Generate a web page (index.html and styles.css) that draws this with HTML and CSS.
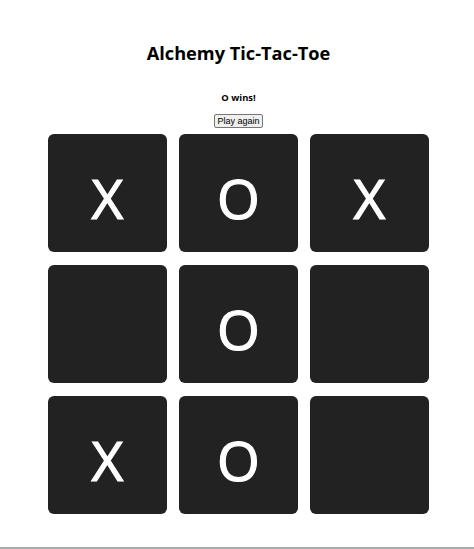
FILE: index.html
```html
<!DOCTYPE html>
<html>
<head>
<meta charset="utf-8">
<link rel="stylesheet" href="styles.css">
</head>
<body>
<div class="page">
  <h1 class="title">Alchemy Tic-Tac-Toe</h1>
  <p class="status">O wins!</p>
  <button class="reset">Play again</button>
  <div class="board">
    <div class="cell">X</div>
    <div class="cell">O</div>
    <div class="cell">X</div>
    <div class="cell"></div>
    <div class="cell">O</div>
    <div class="cell"></div>
    <div class="cell">X</div>
    <div class="cell">O</div>
    <div class="cell"></div>
  </div>
</div>
<div class="bottom-bar"></div>
</body>
</html>
```
FILE: styles.css
```css
html, body {
  margin: 0;
  padding: 0;
  background: #ffffff;
}
body {
  height: 549px;
  display: flex;
  flex-direction: column;
  justify-content: space-between;
  font-family: "Open Sans", "Noto Sans", sans-serif;
  color: #000;
}
.page {
  display: flex;
  flex-direction: column;
  align-items: center;
  padding-top: 40px;
  padding-left: 3px;
}
.title {
  margin: 0;
  font-size: 18.2px;
  font-weight: 700;
  line-height: 26px;
}
.status {
  margin: 25px 0 0;
  font-size: 9.4px;
  font-weight: 700;
  line-height: 14px;
}
.reset {
  margin-top: 9px;
  font-family: "Liberation Sans", Arial, sans-serif;
  font-size: 9px;
  padding: 1px 2px;
  background: #efefef;
  border: 1px solid #767676;
  border-radius: 2px;
  line-height: 10px;
}
.board {
  margin-top: 6px;
  display: grid;
  grid-template-columns: repeat(3, 119px);
  grid-template-rows: repeat(3, 118px);
  column-gap: 12px;
  row-gap: 13px;
}
.cell {
  background: #222222;
  border-radius: 6px;
  color: #ffffff;
  display: flex;
  align-items: center;
  justify-content: center;
  font-family: "Open Sans", sans-serif;
  font-size: 55px;
  line-height: 1;
  -webkit-text-stroke: 1.2px #ffffff;
  padding-top: 8px;
  box-sizing: border-box;
}
.bottom-bar {
  height: 2px;
  background: #a6acaa;
}
```
